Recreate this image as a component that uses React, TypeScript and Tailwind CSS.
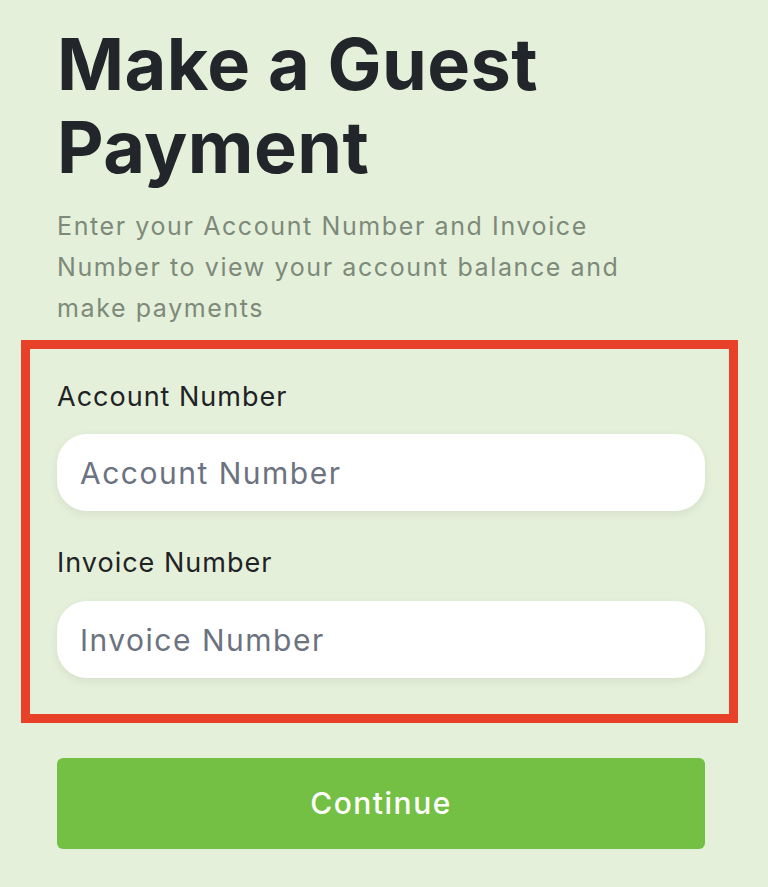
import React from 'react';

const font = { fontFamily: 'Inter, "Noto Sans", sans-serif' };

export default function App() {
  return (
    <div className="min-h-[887px] w-full bg-[#e5f0da] pl-[57px] pr-[63px] pt-[22px]" style={font}>
      <h1 className="text-[72px] font-bold leading-[83px] tracking-[0.4px] text-[#22262a]">
        Make a Guest Payment
      </h1>
      <p className="mt-[18px] max-w-[610px] text-[25px] leading-[41px] tracking-[1.6px] text-[#7d8a7a]">
        Enter your Account Number and Invoice Number to view your account balance and make payments
      </p>

      <div className="mt-[11px] ml-[-36px] mr-[-33px] border-[9px] border-[#e8412a] pl-[27px] pr-[24px] pt-[32px] pb-[36px]">
        <label className="block text-[27px] leading-[32px] tracking-[1px] text-[#1f2326]">Account Number</label>
        <input
          type="text"
          placeholder="Account Number"
          className="mt-[21px] block h-[77px] w-full rounded-[30px] bg-white pl-[23px] text-[30px] tracking-[1.5px] text-[#1f2326] placeholder:text-[#6b7280] shadow-[0_3px_10px_rgba(0,0,0,0.07)] outline-none"
        />
        <label className="mt-[36px] block text-[27px] leading-[32px] tracking-[1px] text-[#1f2326]">Invoice Number</label>
        <input
          type="text"
          placeholder="Invoice Number"
          className="mt-[22px] block h-[77px] w-full rounded-[30px] bg-white pl-[23px] text-[30px] tracking-[1.5px] text-[#1f2326] placeholder:text-[#6b7280] shadow-[0_3px_10px_rgba(0,0,0,0.07)] outline-none"
        />
      </div>

      <button className="mt-[35px] flex h-[91px] w-full items-center justify-center rounded-[6px] bg-[#74c044] text-[30px] font-medium tracking-[1.5px] text-white">
        Continue
      </button>
    </div>
  );
}
